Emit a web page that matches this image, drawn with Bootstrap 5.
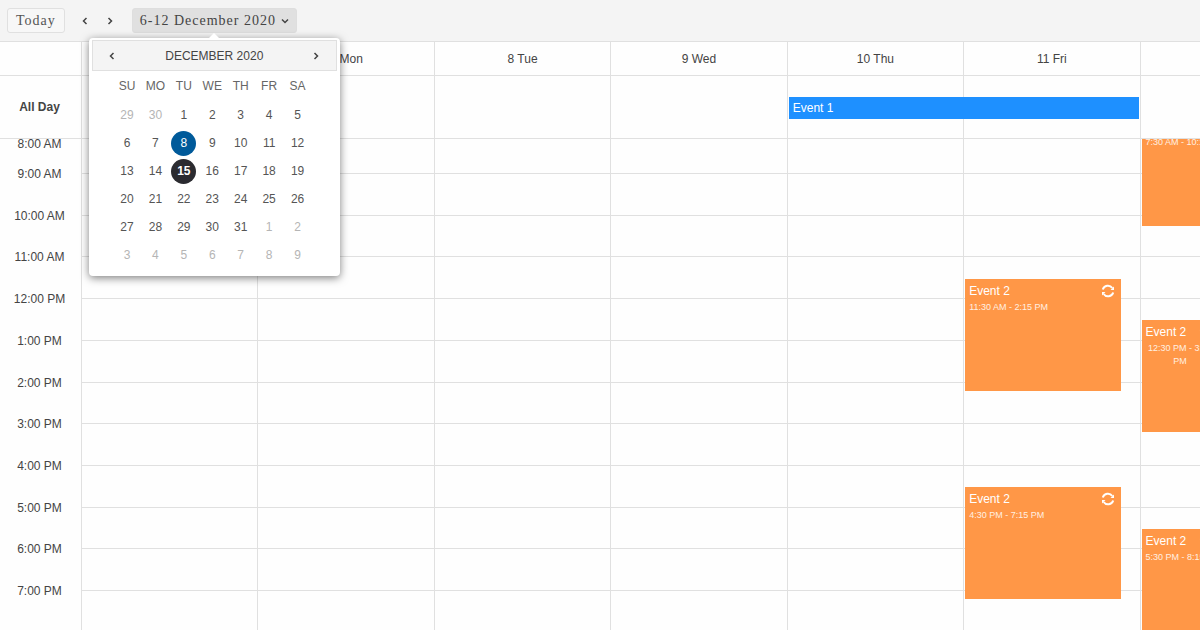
<!DOCTYPE html>
<html lang="en">
<head>
<meta charset="utf-8">
<meta name="viewport" content="width=device-width, initial-scale=1">
<title>Scheduler</title>
<link href="https://cdn.jsdelivr.net/npm/bootstrap@5.3.0/dist/css/bootstrap.min.css" rel="stylesheet">
<style>
  :root { --line: #e0e0e0; }
  body { font: 12px/20px "Liberation Sans", Arial, sans-serif; color: #444; background: #fefefe; }
  .scheduler { min-height: 100vh; }
  .toolbar { background: #f4f4f4; border-bottom: 1px solid var(--line); padding: 8px 7px; z-index: 5; }
  .tool-btn { font: 14px/23px "Liberation Serif", "Times New Roman", serif; letter-spacing: 1px; color: #555; border-radius: 3px; padding: 0 8px; }
  .tool-today { border: 1px solid #e0e0e0; background: #f7f7f7; }
  .tool-range { border: 1px solid #dedede; background: #e0e0e0; color: #444; padding: 0 6px 0 7px; width: 165px; }
  .arrow-btn { width: 25px; height: 25px; padding: 0; color: #444; line-height: 1; border: 0; }
  .range-wrap { margin-left: 9px; }
  .chev { width: 10px; height: 10px; fill: none; stroke: currentColor; stroke-width: 1.5; }

  .picker { left: -43px; top: 100%; margin-top: 5px; width: 251px; padding: 2px 3px 4px; background: #fff; border-radius: 4px; box-shadow: 0 2px 8px rgba(0,0,0,.5); z-index: 10; }
  .picker::before { content: ""; position: absolute; left: 50%; top: -5px; margin-left: -6px; border: 6px solid transparent; border-top: 0; border-bottom: 6px solid #fff; }
  .picker-head { background: #f4f4f4; border: 1px solid var(--line); height: 31px; padding: 0 7px; color: #444; }
  .picker-days { width: 199px; table-layout: fixed; text-align: center; color: #555; margin: 0 auto 3px 21px; }
  .picker-days tr { height: 28px; }
  .picker-days thead tr { height: 30px; }
  .picker-days th { font-weight: 400; padding: 0; color: #666; }
  .picker-days td { padding: 0; }
  .picker-days .other { color: #b5b5b5; }
  .dot { display: block; width: 25px; height: 25px; line-height: 25px; margin: 0 auto; border-radius: 50%; color: #fff; }
  .dot-today { background: #005a9a; }
  .dot-picked { background: #2b2b30; font-weight: 700; }

  .week { width: calc(100% + 116px); }
  .week-row { display: grid; grid-template-columns: 81px repeat(7, minmax(0, 1fr)); }
  .week-row > .cell { border-left: 1px solid var(--line); position: relative; min-width: 0; }
  .week-head { height: 34px; border-bottom: 1px solid var(--line); }
  .all-day { height: 63px; border-bottom: 1px solid var(--line); }
  .side { text-align: center; padding-right: 2px; }
  .hours { display: grid; grid-template-rows: 35px repeat(10, minmax(36px, 1fr)) 39px; }
  .hours .cell { border-bottom: 1px solid var(--line); }
  .hours .side { margin-top: -10px; }
  .hours .first { margin-top: 0; line-height: 10px; }

  .event-long { position: absolute; left: 1px; top: 21px; width: calc(200% - 1px); height: 22px; line-height: 22px; padding-left: 4px; background: #1e90ff; color: #fff; z-index: 1; }
  .event { position: absolute; left: 1px; top: calc(50% + 1px); width: calc(100% - 20px); height: 275%; padding: 2px 4px; background: #ff9747; color: #fff; z-index: 1; }
  .event-half { width: 77px; }
  .event-early { top: calc(-150% + 1px); }
  .event-time { font-size: 9px; line-height: 13px; color: #fff0e2; }
  .repeat { width: 14px; height: 14px; fill: none; stroke: #fff; stroke-width: 2; margin-right: 2px; }
</style>
</head>
<body>
<svg class="d-none" aria-hidden="true">
  <symbol id="left" viewBox="0 0 10 10"><path d="M6.5 2 3.5 5l3 3"/></symbol>
  <symbol id="right" viewBox="0 0 10 10"><path d="m3.5 2 3 3-3 3"/></symbol>
  <symbol id="down" viewBox="0 0 10 10"><path d="m2 3.500 3 3 3-3"/></symbol>
  <symbol id="cycle" viewBox="0 0 14 14"><path d="M1.800 5.500A5.300 5.300 0 0 1 11.300 4M12.200 8.500A5.300 5.300 0 0 1 2.700 10"/><path d="M13 2.500v3.500H9.500zM1 11.500V8h3.500z" fill="#fff" stroke="none"/></symbol>
</svg>
<div class="scheduler d-flex flex-column overflow-hidden">
  <header class="toolbar d-flex align-items-center position-relative">
    <button type="button" class="btn tool-btn tool-today">Today</button>
    <button type="button" class="btn arrow-btn ms-2" aria-label="Previous week"><svg class="chev"><use href="#left"/></svg></button>
    <button type="button" class="btn arrow-btn" aria-label="Next week"><svg class="chev"><use href="#right"/></svg></button>
    <div class="range-wrap position-relative">
      <button type="button" class="btn tool-btn tool-range d-flex align-items-center justify-content-between text-nowrap" aria-expanded="true">6-12 December 2020<svg class="chev"><use href="#down"/></svg></button>
      <div class="picker position-absolute">
        <div class="picker-head d-flex align-items-center justify-content-between">
          <button type="button" class="btn arrow-btn" aria-label="Previous month"><svg class="chev"><use href="#left"/></svg></button>
          <span>DECEMBER 2020</span>
          <button type="button" class="btn arrow-btn" aria-label="Next month"><svg class="chev"><use href="#right"/></svg></button>
        </div>
        <table class="picker-days">
          <thead><tr><th>SU</th><th>MO</th><th>TU</th><th>WE</th><th>TH</th><th>FR</th><th>SA</th></tr></thead>
          <tbody>
            <tr><td class="other">29</td><td class="other">30</td><td>1</td><td>2</td><td>3</td><td>4</td><td>5</td></tr>
            <tr><td>6</td><td>7</td><td><span class="dot dot-today">8</span></td><td>9</td><td>10</td><td>11</td><td>12</td></tr>
            <tr><td>13</td><td>14</td><td><span class="dot dot-picked">15</span></td><td>16</td><td>17</td><td>18</td><td>19</td></tr>
            <tr><td>20</td><td>21</td><td>22</td><td>23</td><td>24</td><td>25</td><td>26</td></tr>
            <tr><td>27</td><td>28</td><td>29</td><td>30</td><td>31</td><td class="other">1</td><td class="other">2</td></tr>
            <tr class="other"><td>3</td><td>4</td><td>5</td><td>6</td><td>7</td><td>8</td><td>9</td></tr>
          </tbody>
        </table>
      </div>
    </div>
  </header>

  <main class="week d-flex flex-column flex-grow-1">
    <div class="week-row week-head">
      <div></div>
      <div class="cell"></div>
      <div class="cell d-flex align-items-center justify-content-center">7 Mon</div>
      <div class="cell d-flex align-items-center justify-content-center">8 Tue</div>
      <div class="cell d-flex align-items-center justify-content-center">9 Wed</div>
      <div class="cell d-flex align-items-center justify-content-center">10 Thu</div>
      <div class="cell d-flex align-items-center justify-content-center">11 Fri</div>
      <div class="cell"></div>
    </div>
    <div class="week-row all-day">
      <div class="side fw-bold align-self-center">All Day</div>
      <div class="cell"></div><div class="cell"></div><div class="cell"></div><div class="cell"></div>
      <div class="cell"><div class="event-long">Event 1</div></div>
      <div class="cell"></div><div class="cell"></div>
    </div>
    <div class="hours flex-grow-1 overflow-hidden">
      <div class="week-row"><div class="side first">8:00 AM</div><div class="cell"></div><div class="cell"></div><div class="cell"></div><div class="cell"></div><div class="cell"></div><div class="cell"></div><div class="cell"></div></div>
      <div class="week-row"><div class="side">9:00 AM</div><div class="cell"></div><div class="cell"></div><div class="cell"></div><div class="cell"></div><div class="cell"></div><div class="cell"></div>
        <div class="cell"><div class="event event-half event-early">
          <div class="d-flex align-items-center justify-content-between">Event 2<svg class="repeat"><use href="#cycle"/></svg></div>
          <div class="event-time text-nowrap">7:30 AM - 10:15 AM</div>
        </div></div>
      </div>
      <div class="week-row"><div class="side">10:00 AM</div><div class="cell"></div><div class="cell"></div><div class="cell"></div><div class="cell"></div><div class="cell"></div><div class="cell"></div><div class="cell"></div></div>
      <div class="week-row"><div class="side">11:00 AM</div><div class="cell"></div><div class="cell"></div><div class="cell"></div><div class="cell"></div><div class="cell"></div>
        <div class="cell"><div class="event">
          <div class="d-flex align-items-center justify-content-between">Event 2<svg class="repeat"><use href="#cycle"/></svg></div>
          <div class="event-time">11:30 AM - 2:15 PM</div>
        </div></div>
        <div class="cell"></div>
      </div>
      <div class="week-row"><div class="side">12:00 PM</div><div class="cell"></div><div class="cell"></div><div class="cell"></div><div class="cell"></div><div class="cell"></div><div class="cell"></div>
        <div class="cell"><div class="event event-half">
          <div class="d-flex align-items-center justify-content-between">Event 2<svg class="repeat"><use href="#cycle"/></svg></div>
          <div class="event-time text-center">12:30 PM - 3:15 PM</div>
        </div></div>
      </div>
      <div class="week-row"><div class="side">1:00 PM</div><div class="cell"></div><div class="cell"></div><div class="cell"></div><div class="cell"></div><div class="cell"></div><div class="cell"></div><div class="cell"></div></div>
      <div class="week-row"><div class="side">2:00 PM</div><div class="cell"></div><div class="cell"></div><div class="cell"></div><div class="cell"></div><div class="cell"></div><div class="cell"></div><div class="cell"></div></div>
      <div class="week-row"><div class="side">3:00 PM</div><div class="cell"></div><div class="cell"></div><div class="cell"></div><div class="cell"></div><div class="cell"></div><div class="cell"></div><div class="cell"></div></div>
      <div class="week-row"><div class="side">4:00 PM</div><div class="cell"></div><div class="cell"></div><div class="cell"></div><div class="cell"></div><div class="cell"></div>
        <div class="cell"><div class="event">
          <div class="d-flex align-items-center justify-content-between">Event 2<svg class="repeat"><use href="#cycle"/></svg></div>
          <div class="event-time">4:30 PM - 7:15 PM</div>
        </div></div>
        <div class="cell"></div>
      </div>
      <div class="week-row"><div class="side">5:00 PM</div><div class="cell"></div><div class="cell"></div><div class="cell"></div><div class="cell"></div><div class="cell"></div><div class="cell"></div>
        <div class="cell"><div class="event event-half">
          <div class="d-flex align-items-center justify-content-between">Event 2<svg class="repeat"><use href="#cycle"/></svg></div>
          <div class="event-time text-nowrap">5:30 PM - 8:15 PM</div>
        </div></div>
      </div>
      <div class="week-row"><div class="side">6:00 PM</div><div class="cell"></div><div class="cell"></div><div class="cell"></div><div class="cell"></div><div class="cell"></div><div class="cell"></div><div class="cell"></div></div>
      <div class="week-row"><div class="side">7:00 PM</div><div class="cell border-bottom-0"></div><div class="cell border-bottom-0"></div><div class="cell border-bottom-0"></div><div class="cell border-bottom-0"></div><div class="cell border-bottom-0"></div><div class="cell border-bottom-0"></div><div class="cell border-bottom-0"></div></div>
    </div>
  </main>
</div>
<script src="https://cdn.jsdelivr.net/npm/bootstrap@5.3.0/dist/js/bootstrap.bundle.min.js"></script>
</body>
</html>
